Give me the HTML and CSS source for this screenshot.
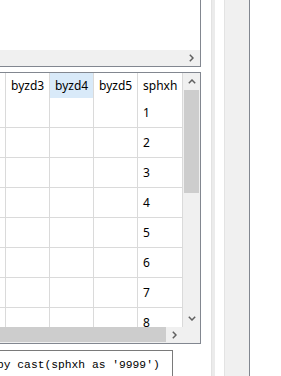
FILE: index.html
```html
<!DOCTYPE html>
<html>
<head>
<meta charset="utf-8">
<link rel="stylesheet" href="styles.css">
</head>
<body>
<div class="page">
  <div class="left">
    <div class="pane-top">
      <div class="pane-top-body"></div>
      <div class="hbar">
        <div class="hbar-track"></div>
        <div class="sbtn"><svg width="5" height="8" viewBox="0 0 5 8"><polyline points="0.8,0.8 4,4 0.8,7.2" fill="none" stroke="#606060" stroke-width="1.5"/></svg></div>
      </div>
    </div>

    <div class="grid-panel">
      <div class="grid-view">
        <div class="table">
          <div class="hcell">byzd2</div>
          <div class="hcell">byzd3</div>
          <div class="hcell hcell-sel">byzd4</div>
          <div class="hcell">byzd5</div>
          <div class="hcell">sphxh</div>

          <div class="cell"></div><div class="cell"></div><div class="cell"></div><div class="cell"></div><div class="cell">1</div>
          <div class="cell"></div><div class="cell"></div><div class="cell"></div><div class="cell"></div><div class="cell">2</div>
          <div class="cell"></div><div class="cell"></div><div class="cell"></div><div class="cell"></div><div class="cell">3</div>
          <div class="cell"></div><div class="cell"></div><div class="cell"></div><div class="cell"></div><div class="cell">4</div>
          <div class="cell"></div><div class="cell"></div><div class="cell"></div><div class="cell"></div><div class="cell">5</div>
          <div class="cell"></div><div class="cell"></div><div class="cell"></div><div class="cell"></div><div class="cell">6</div>
          <div class="cell"></div><div class="cell"></div><div class="cell"></div><div class="cell"></div><div class="cell">7</div>
          <div class="cell"></div><div class="cell"></div><div class="cell"></div><div class="cell"></div><div class="cell">8</div>
        </div>
      </div>

      <div class="vbar">
        <div class="vbtn"><svg width="8" height="5" viewBox="0 0 8 5"><polyline points="0.8,4.2 4,1 7.2,4.2" fill="none" stroke="#606060" stroke-width="1.5"/></svg></div>
        <div class="vbar-track"><div class="vthumb"></div></div>
        <div class="vbtn"><svg width="8" height="5" viewBox="0 0 8 5"><polyline points="0.8,0.8 4,4 7.2,0.8" fill="none" stroke="#606060" stroke-width="1.5"/></svg></div>
      </div>

      <div class="hbar hbar-grid">
        <div class="hthumb"></div>
        <div class="sbtn"><svg width="5" height="8" viewBox="0 0 5 8"><polyline points="0.8,0.8 4,4 0.8,7.2" fill="none" stroke="#606060" stroke-width="1.5"/></svg></div>
      </div>

      <div class="corner"></div>
    </div>

    <div class="sql-box"><span class="sql-text">by cast(sphxh as '9999')</span></div>
  </div>

  <div class="right">
    <div class="gap-a"></div>
    <div class="split-band"></div>
    <div class="gap-b"></div>
    <div class="side-pane"></div>
    <div class="rest"></div>
  </div>
</div>
</body>
</html>
```

FILE: styles.css
```css
html, body {
  margin: 0;
  padding: 0;
  background: #ffffff;
}

.page {
  width: 281px;
  height: 376px;
  overflow: hidden;
  display: flex;
  font-family: "Noto Sans", "Liberation Sans", sans-serif;
  font-size: 12px;
  color: #000;
}

.left {
  width: 201px;
  flex: none;
  display: flex;
  flex-direction: column;
}

/* top pane */
.pane-top {
  border-right: 1px solid #828790;
  border-bottom: 1px solid #828790;
  display: flex;
  flex-direction: column;
}

.pane-top-body {
  height: 50px;
  background: #fff;
}

.hbar {
  height: 16px;
  background: #f0f0f0;
  display: flex;
}

.hbar-track {
  flex: 1;
}

.sbtn {
  width: 17px;
  display: flex;
  align-items: center;
  justify-content: center;
}

/* grid panel */
.grid-panel {
  margin-top: 5px;
  border-top: 1px solid #828790;
  border-right: 1px solid #828790;
  border-bottom: 1px solid #828790;
  display: grid;
  grid-template-columns: 183px 17px;
  grid-template-rows: 254px 16px;
}

.grid-view {
  overflow: hidden;
  background: #fff;
}

.table {
  margin-left: -38px;
  display: grid;
  grid-template-columns: 44px 44px 44px 44px 45px;
  grid-auto-rows: 30px;
  grid-template-rows: 25px;
}

.hcell,
.cell {
  box-sizing: border-box;
  border-right: 1px solid #dadada;
  padding-left: 5px;
  display: flex;
  align-items: center;
  white-space: nowrap;
  overflow: hidden;
  line-height: 14px;
}

.hcell {
  height: 25px;
}

.hcell-sel {
  background: #d9eaf9;
}

.cell {
  height: 30px;
  border-bottom: 1px solid #dadada;
  padding-top: 1px;
}

.vbar {
  background: #f0f0f0;
  display: flex;
  flex-direction: column;
}

.vbtn {
  height: 17px;
  display: flex;
  align-items: center;
  justify-content: center;
  flex: none;
}

.vbar-track {
  flex: 1;
}

.vthumb {
  margin: 0 1px 0 1px;
  height: 103px;
  background: #cdcdcd;
}

.hbar-grid {
  background: #f0f0f0;
}

.hthumb {
  width: 166px;
  height: 15px;
  background: #cdcdcd;
}

.hbar-grid .sbtn {
  width: 17px;
}

.corner {
  background: #f0f0f0;
}

/* sql text box */
.sql-box {
  margin-top: 6px;
  width: 172px;
  flex: 1;
  border-top: 1px solid #7a7a7a;
  border-right: 1px solid #7a7a7a;
  padding-top: 4px;
  overflow: hidden;
  white-space: nowrap;
}

.sql-text {
  display: inline-block;
  margin-left: -3px;
  font-family: "Liberation Mono", monospace;
  font-size: 11.3px;
  line-height: 13px;
  color: #000;
}

/* right side */
.right {
  flex: 1;
  display: flex;
}

.gap-a {
  width: 10px;
  background: #fff;
}

.split-band {
  width: 4px;
  background: #ebebeb;
  border-left: 1px solid #e2e2e2;
  box-sizing: border-box;
}

.gap-b {
  width: 9px;
  background: #fff;
}

.side-pane {
  box-sizing: border-box;
  background: #f0f0f0;
  border-left: 1px solid #e3e3e3;
  border-right: 1px solid #828790;
  width: 26px;
}

.rest {
  flex: 1;
  background: #fff;
}
```
